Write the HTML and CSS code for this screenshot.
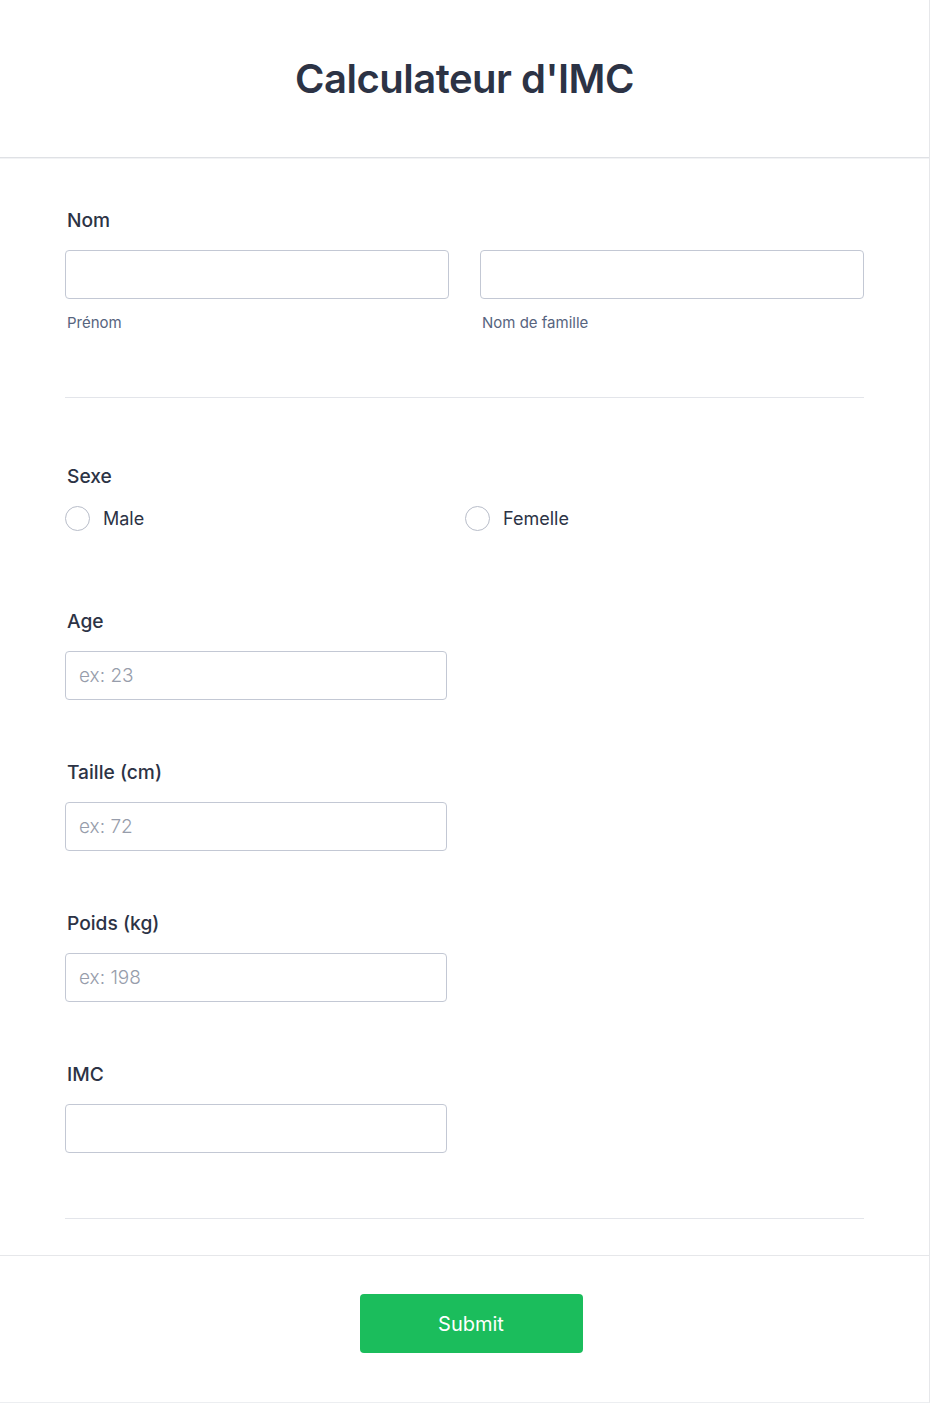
FILE: index.html
```html
<!DOCTYPE html>
<html lang="fr">
<head>
<meta charset="utf-8">
<title>Calculateur d'IMC</title>
<link rel="stylesheet" href="styles.css">
</head>
<body>
<div class="card">
  <header class="header">
    <h1 class="title">Calculateur d'IMC</h1>
  </header>
  <form class="form">
    <section class="field field-name">
      <label class="label">Nom</label>
      <div class="name-grid">
        <div class="name-col">
          <input class="input" type="text">
          <span class="sublabel">Prénom</span>
        </div>
        <div class="name-col">
          <input class="input" type="text">
          <span class="sublabel">Nom de famille</span>
        </div>
      </div>
    </section>
    <hr class="divider">
    <section class="field field-sexe">
      <label class="label">Sexe</label>
      <div class="radio-grid">
        <label class="radio"><span class="circle"></span><span class="radio-text">Male</span></label>
        <label class="radio"><span class="circle"></span><span class="radio-text">Femelle</span></label>
      </div>
    </section>
    <section class="field field-single first">
      <label class="label">Age</label>
      <input class="input input-single" type="text" placeholder="ex: 23">
    </section>
    <section class="field field-single">
      <label class="label">Taille (cm)</label>
      <input class="input input-single" type="text" placeholder="ex: 72">
    </section>
    <section class="field field-single">
      <label class="label">Poids (kg)</label>
      <input class="input input-single" type="text" placeholder="ex: 198">
    </section>
    <section class="field field-single">
      <label class="label">IMC</label>
      <input class="input input-single" type="text">
    </section>
    <hr class="divider divider-last">
  </form>
  <footer class="footer">
    <button class="submit" type="button">Submit</button>
  </footer>
</div>
</body>
</html>
```

FILE: styles.css
```css
* { box-sizing: border-box; }
html, body { margin: 0; padding: 0; background: #ffffff; }
body {
  font-family: Inter, "Noto Sans", "Liberation Sans", sans-serif;
  color: #2c3345;
}
.card {
  width: 930px;
  border-right: 1px solid #e6e7ea;
  border-bottom: 1px solid #eceef1;
}
.header {
  height: 158px;
  border-bottom: 1px solid #dfe1e5;
  box-shadow: 0 1px 0 #f2f3f5;
  display: flex;
  align-items: center;
  justify-content: center;
}
.title {
  margin: 0;
  font-size: 40px;
  font-weight: 600;
  letter-spacing: -0.5px;
  color: #2c3345;
  line-height: 48px;
  padding-top: 1px;
}
.form {
  padding: 0 65px;
}
.field { display: flex; flex-direction: column; }
.label {
  display: block;
  font-size: 19.2px;
  font-weight: 500;
  line-height: 22px;
  padding-left: 2px;
  color: #2c3345;
}
.field-name { padding-top: 51px; }
.field-name .label { margin-bottom: 19px; }
.name-grid {
  display: grid;
  grid-template-columns: 384px 384px;
  column-gap: 31px;
}
.name-col { display: flex; flex-direction: column; }
.input {
  height: 49px;
  border: 1px solid #c3c8d4;
  border-radius: 4px;
  background: #fff;
  font-family: inherit;
  font-size: 19px;
  color: #2c3345;
  padding: 0 13px;
  margin: 0;
  outline: none;
}
.input::placeholder { color: #979dab; font-weight: 300; }
.sublabel {
  margin-top: 15px;
  font-size: 15px;
  line-height: 18px;
  padding-left: 2px;
  color: #57647e;
}
.divider {
  border: 0;
  border-top: 1px solid #e3e5ea;
  margin: 65px 0 0 0;
  height: 0;
}
.field-sexe { padding-top: 67px; }
.field-sexe .label { margin-bottom: 19px; }
.radio-grid {
  display: grid;
  grid-template-columns: 400px 1fr;
}
.radio {
  display: flex;
  align-items: center;
  gap: 13px;
  font-size: 18px;
  line-height: 24px;
  color: #2c3345;
}
.circle {
  width: 25px;
  height: 25px;
  border: 1px solid #b8bdc9;
  border-radius: 50%;
  background: #fff;
  flex: none;
}
.field-single { padding-top: 61px; }
.field-single.first { padding-top: 79px; }
.field-single .label { margin-bottom: 19px; }
.input-single { width: 382px; }
.divider-last { margin-top: 65px; }
.footer {
  margin-top: 36px;
  border-top: 1px solid #e6e7ea;
  padding: 38px 0 49px 13px;
  display: flex;
  justify-content: center;
}
.submit {
  width: 223px;
  height: 59px;
  border: 0;
  border-radius: 4px;
  background: #1bbd5c;
  color: #ffffff;
  font-family: inherit;
  font-size: 20px;
  font-weight: 400;
  cursor: pointer;
}
```
